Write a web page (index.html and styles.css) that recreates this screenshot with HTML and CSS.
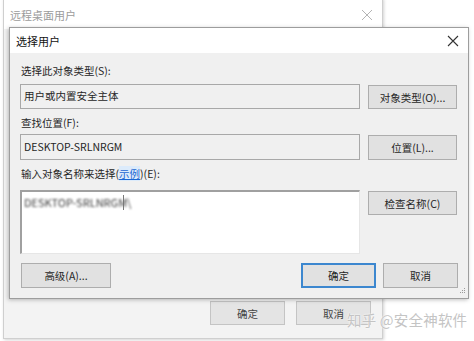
FILE: index.html
```html
<!DOCTYPE html>
<html lang="zh-CN">
<head>
<meta charset="utf-8">
<link rel="stylesheet" href="styles.css">
</head>
<body>
<div class="desk">
  <div class="win back">
    <div class="titlebar">
      <span class="title">远程桌面用户</span>
      <svg class="close" width="12" height="12" viewBox="0 0 12 12"><path d="M1 1L11 11M11 1L1 11" stroke="#b4b4b4" stroke-width="1"/></svg>
    </div>
    <div class="back-body">
      <div class="back-btns">
        <div class="btn">确定</div>
        <div class="btn">取消</div>
      </div>
    </div>
  </div>

  <div class="win front">
    <div class="titlebar">
      <span class="title">选择用户</span>
      <svg class="close" width="12" height="12" viewBox="0 0 12 12"><path d="M1 1L11 11M11 1L1 11" stroke="#333" stroke-width="1.1"/></svg>
    </div>
    <div class="body">
      <div class="label l1">选择此对象类型(S):</div>
      <div class="row r1">
        <div class="field">用户或内置安全主体</div>
        <div class="btn side">对象类型(O)...</div>
      </div>
      <div class="label l2">查找位置(F):</div>
      <div class="row r2">
        <div class="field tall">DESKTOP-SRLNRGM</div>
        <div class="btn side tall">位置(L)...</div>
      </div>
      <div class="label l3">输入对象名称来选择(<span class="link">示例</span>)(E):</div>
      <div class="row r3">
        <div class="area"><span class="blur">DESKTOP-SRLNRGM\</span><span class="caret"></span></div>
        <div class="btn side">检查名称(C)</div>
      </div>
      <div class="row bottom">
        <div class="btn">高级(A)...</div>
        <div class="ok-cancel">
          <div class="btn default">确定</div>
          <div class="btn">取消</div>
        </div>
      </div>
      <svg class="grip" width="8" height="8" viewBox="0 0 8 8"><g fill="#9a9a9a"><rect x="6" y="0" width="1" height="1"/><rect x="4" y="2" width="1" height="1"/><rect x="6" y="2" width="1" height="1"/><rect x="2" y="4" width="1" height="1"/><rect x="4" y="4" width="1" height="1"/><rect x="6" y="4" width="1" height="1"/></g></svg>
    </div>
  </div>

  <div class="watermark"><span>知乎</span> <span>@安全神软件</span></div>
</div>
</body>
</html>
```

FILE: styles.css
```css
html, body {
  margin: 0;
  padding: 0;
  background: #ffffff;
}
body {
  font-family: "Noto Sans CJK SC", "Noto Sans", sans-serif;
  font-size: 10.5px;
  color: #262626;
}
.desk {
  position: relative;
  width: 474px;
  height: 341px;
  overflow: hidden;
}
.win {
  position: absolute;
  box-sizing: border-box;
  display: flex;
  flex-direction: column;
}
.back {
  left: 3px;
  top: -2px;
  width: 380px;
  height: 341px;
  border: 1px solid #cfcfcf;
  background: #f3f3f3;
  box-shadow: 1px 1px 3px rgba(0,0,0,0.18);
}
.back .titlebar {
  height: 30px;
  background: #ffffff;
  display: flex;
  align-items: center;
  justify-content: space-between;
  padding: 2px 9px 0 6px;
  box-sizing: border-box;
}
.back .title {
  color: #9b9b9b;
  font-size: 11px;
}
.back-body {
  flex: 1;
  display: flex;
  flex-direction: column;
  justify-content: flex-end;
}
.back-btns {
  display: flex;
  justify-content: flex-end;
  gap: 11px;
  padding: 0 11px 13px 0;
}
.back-btns .btn {
  width: 75px;
  height: 24px;
  background: #e4e4e4;
  border-color: #c4c4c4;
  color: #444;
}
.front {
  left: 9px;
  top: 27px;
  width: 460px;
  height: 272px;
  border: 1px solid #9d9d9d;
  background: #f0f0f0;
  box-shadow: -1px 1px 4px rgba(0,0,0,0.25);
}
.front .titlebar {
  height: 25px;
  background: #ffffff;
  display: flex;
  align-items: center;
  justify-content: space-between;
  padding: 0 9px 0 6px;
  box-sizing: border-box;
}
.front .title {
  font-size: 11px;
  color: #111;
}
.body {
  position: relative;
  flex: 1;
  display: flex;
  flex-direction: column;
  padding: 0 10px 0 10px;
}
.label {
  height: 16px;
  line-height: 16px;
  padding-left: 1px;
}
.l1 { margin-top: 10px; }
.l2 { margin-top: 6px; }
.l3 { margin-top: 6px; }
.link {
  color: #1a66d2;
  text-decoration: underline;
  background: #dcebfb;
}
.row {
  display: flex;
  gap: 8px;
  align-items: flex-start;
}
.r1 { margin-top: 5px; }
.r2 { margin-top: 3px; }
.r3 { margin-top: 8px; }
.field {
  box-sizing: border-box;
  width: 340px;
  height: 25px;
  border: 1px solid #a8a8a8;
  background: #f0f0f0;
  padding: 0 3px;
  line-height: 22px;
}
.tall { height: 26px; line-height: 23px; }
.btn {
  box-sizing: border-box;
  display: flex;
  align-items: center;
  justify-content: center;
  border: 1px solid #adadad;
  background: #e1e1e1;
  height: 25px;
}
.side {
  width: 89px;
  margin-top: 1px;
  height: 24px;
}
.side.tall { height: 25px; }
.area {
  position: relative;
  box-sizing: border-box;
  width: 340px;
  height: 64px;
  background: #ffffff;
  border-top: 2px solid #a0a0a0;
  border-left: 2px solid #a0a0a0;
  border-right: 1px solid #e6e6e6;
  border-bottom: 1px solid #e6e6e6;
  padding: 2px 2px;
}
.blur {
  display: inline-block;
  color: #3a3a3a;
  filter: blur(1.3px);
  font-size: 11px;
}
.caret {
  position: absolute;
  left: 101px;
  top: 3px;
  width: 1px;
  height: 15px;
  background: #777;
}
.bottom {
  margin-top: 9px;
  justify-content: space-between;
}
.bottom > .btn {
  width: 90px;
  margin-left: 1px;
}
.ok-cancel {
  display: flex;
  gap: 7px;
}
.ok-cancel .btn {
  width: 75px;
}
.btn.default {
  border: 2px solid #3c87cf;
}
.grip {
  position: absolute;
  right: 2px;
  bottom: 2px;
}
.watermark {
  position: absolute;
  left: 347px;
  top: 309px;
  font-size: 14.5px;
  color: #c4c4c4;
  letter-spacing: 0.2px;
  text-shadow: 0 0 1px #ffffff, 0 0 2px #ffffff;
  white-space: nowrap;
}
```
